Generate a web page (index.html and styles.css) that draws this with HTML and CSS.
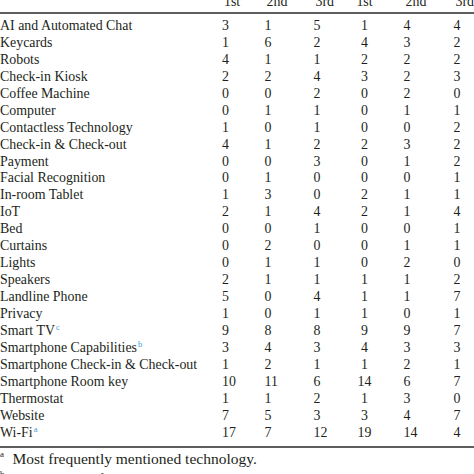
FILE: index.html
```html
<!DOCTYPE html>
<html>
<head>
<meta charset="utf-8">
<link rel="stylesheet" href="styles.css">
</head>
<body>
<div class="table">
  <div class="row head">
    <div></div><div>1st</div><div>2nd</div><div>3rd</div><div class="mid"><span>1st</span></div><div>2nd</div><div>3rd</div>
  </div>
  <div class="body">
    <div class="row"><div>AI and Automated Chat</div><div>3</div><div>1</div><div>5</div><div class="mid">1</div><div>4</div><div>4</div></div>
    <div class="row"><div>Keycards</div><div>1</div><div>6</div><div>2</div><div class="mid">4</div><div>3</div><div>2</div></div>
    <div class="row"><div>Robots</div><div>4</div><div>1</div><div>1</div><div class="mid">2</div><div>2</div><div>2</div></div>
    <div class="row"><div>Check-in Kiosk</div><div>2</div><div>2</div><div>4</div><div class="mid">3</div><div>2</div><div>3</div></div>
    <div class="row"><div>Coffee Machine</div><div>0</div><div>0</div><div>2</div><div class="mid">0</div><div>2</div><div>0</div></div>
    <div class="row"><div>Computer</div><div>0</div><div>1</div><div>1</div><div class="mid">0</div><div>1</div><div>1</div></div>
    <div class="row"><div>Contactless Technology</div><div>1</div><div>0</div><div>1</div><div class="mid">0</div><div>0</div><div>2</div></div>
    <div class="row"><div>Check-in &amp; Check-out</div><div>4</div><div>1</div><div>2</div><div class="mid">2</div><div>3</div><div>2</div></div>
    <div class="row"><div>Payment</div><div>0</div><div>0</div><div>3</div><div class="mid">0</div><div>1</div><div>2</div></div>
    <div class="row"><div>Facial Recognition</div><div>0</div><div>1</div><div>0</div><div class="mid">0</div><div>0</div><div>1</div></div>
    <div class="row"><div>In-room Tablet</div><div>1</div><div>3</div><div>0</div><div class="mid">2</div><div>1</div><div>1</div></div>
    <div class="row"><div>IoT</div><div>2</div><div>1</div><div>4</div><div class="mid">2</div><div>1</div><div>4</div></div>
    <div class="row"><div>Bed</div><div>0</div><div>0</div><div>1</div><div class="mid">0</div><div>0</div><div>1</div></div>
    <div class="row"><div>Curtains</div><div>0</div><div>2</div><div>0</div><div class="mid">0</div><div>1</div><div>1</div></div>
    <div class="row"><div>Lights</div><div>0</div><div>1</div><div>1</div><div class="mid">0</div><div>2</div><div>0</div></div>
    <div class="row"><div>Speakers</div><div>2</div><div>1</div><div>1</div><div class="mid">1</div><div>1</div><div>2</div></div>
    <div class="row"><div>Landline Phone</div><div>5</div><div>0</div><div>4</div><div class="mid">1</div><div>1</div><div>7</div></div>
    <div class="row"><div>Privacy</div><div>1</div><div>0</div><div>1</div><div class="mid">1</div><div>0</div><div>1</div></div>
    <div class="row"><div>Smart TV<sup class="fn">c</sup></div><div>9</div><div>8</div><div>8</div><div class="mid">9</div><div>9</div><div>7</div></div>
    <div class="row"><div>Smartphone Capabilities<sup class="fn">b</sup></div><div>3</div><div>4</div><div>3</div><div class="mid">4</div><div>3</div><div>3</div></div>
    <div class="row"><div>Smartphone Check-in &amp; Check-out</div><div>1</div><div>2</div><div>1</div><div class="mid">1</div><div>2</div><div>1</div></div>
    <div class="row"><div>Smartphone Room key</div><div>10</div><div>11</div><div>6</div><div class="mid">14</div><div>6</div><div>7</div></div>
    <div class="row"><div>Thermostat</div><div>1</div><div>1</div><div>2</div><div class="mid">1</div><div>3</div><div>0</div></div>
    <div class="row"><div>Website</div><div>7</div><div>5</div><div>3</div><div class="mid">3</div><div>4</div><div>7</div></div>
    <div class="row"><div>Wi-Fi<sup class="fn">a</sup></div><div>17</div><div>7</div><div>12</div><div class="mid">19</div><div>14</div><div>4</div></div>
  </div>
  <div class="notes">
    <p class="note"><sup>a</sup><span>Most frequently mentioned technology.</span></p>
    <p class="note"><sup>b</sup><span>Capabilities of smartphone.</span></p>
  </div>
</div>
</body>
</html>
```

FILE: styles.css
```css
html, body {
  margin: 0;
  padding: 0;
  background: #ffffff;
  overflow: hidden;
}
body {
  font-family: "Liberation Serif", "Times New Roman", serif;
  font-size: 13.9px;
  color: #231f20;
  width: 474px;
  height: 474px;
}
.table {
  display: flex;
  flex-direction: column;
}
.row {
  display: grid;
  grid-template-columns: 222px 42.5px 49px 45px 45px 50px 1fr;
  height: 16.95px;
  line-height: 16.95px;
  white-space: nowrap;
}
.row .mid {
  width: 12px;
  display: flex;
  justify-content: center;
}
.head {
  margin-top: -6px;
  height: 17px;
  padding-bottom: 1px;
  border-bottom: 2px solid #5e5e5e;
}
.head div {
  padding-left: 2px;
}
.head .mid {
  padding-left: 0;
}
.body {
  padding-top: 4px;
  padding-bottom: 5px;
  border-bottom: 2px solid #5e5e5e;
}
.fn {
  color: #3ea0d8;
  font-size: 8.5px;
  line-height: 0;
  vertical-align: 5px;
  margin-left: 1px;
}
.notes {
  padding-top: 2px;
}
.note {
  margin: 0;
  display: flex;
  align-items: flex-start;
  font-size: 15.5px;
  line-height: 18px;
  height: 18px;
  margin-bottom: 2px;
}
.note sup {
  font-size: 9px;
  line-height: 9px;
  width: 12.5px;
  flex: none;
}
```
